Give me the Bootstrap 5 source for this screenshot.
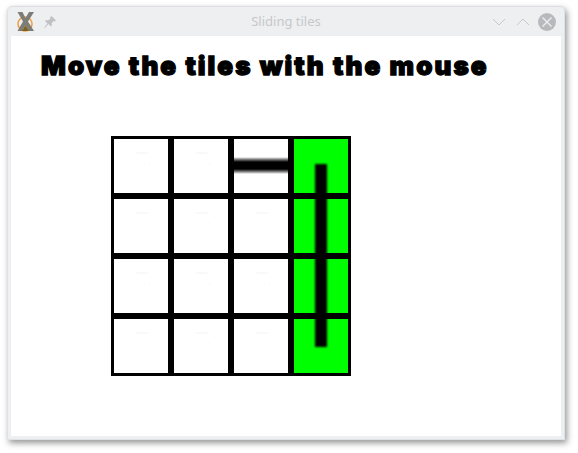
<!DOCTYPE html>
<html lang="en">
<head>
<meta charset="utf-8">
<title>Sliding tiles</title>
<link href="https://cdn.jsdelivr.net/npm/bootstrap@5.3.0/dist/css/bootstrap.min.css" rel="stylesheet">
<style>
html, body { height: 100%; background: #fff; overflow: hidden; }
.desk { padding: 6px 13px 13px 7px; height: 453px; }
.win { height: 434px; background: #eeeff1; border: 1px solid #dfe1e4; border-top-color: #dcdee2; border-radius: 5px 5px 0 0; box-shadow: 2px 3px 6px rgba(0,0,0,.42); }
.tbar { height: 29px; padding: 0 8px 0 8px; position: relative; }
.ttl { font-family: "Noto Sans", sans-serif; font-size: 13px; color: #c6c8cb; position: absolute; left: 0; right: 0; text-align: center; line-height: 29px; }
.xlogo { width: 20px; height: 20px; }
.pin { width: 14px; height: 14px; margin-left: 7px; }
.ctl { width: 16px; height: 16px; }
.cls { width: 18px; height: 18px; margin-left: -1px; }
.pane { background: #fff; margin: 0 3px 3px; padding: 10px 30px 0 100px; min-height: 0; }
.hdg { font-family: "Inter", sans-serif; font-weight: 900; font-size: 26px; line-height: 40px; letter-spacing: 2.05px; color: #000; -webkit-text-stroke: 1.3px #000; margin: 0 0 50px -70px; white-space: nowrap; }
.board { display: grid; grid-template-columns: repeat(4, 60px); grid-auto-rows: 60px; width: 240px; }
.tile { border: 3px solid #000; background-color: #fff; overflow: hidden; }
.faint { background-image: linear-gradient(to right, #fff, #f8f8f8 30%, #f8f8f8 70%, #fff), linear-gradient(#f9f9f9, #f9f9f9); background-size: 16px 2px, 1px 3px; background-position: 20px 13px, 35px 23px; background-repeat: no-repeat; }
.hbar { background-image: linear-gradient(to bottom, #fff 0, #fff 18px, #777 20.5px, #000 23px, #000 30px, #777 32.5px, #fff 35px); }
.grn { background-color: #0f0; }
.vb { display: flex; justify-content: center; align-items: flex-start; }
.vb::before { content: ""; display: block; flex: none; width: 12px; background: #000; filter: blur(1.2px); }
.vtop::before { margin-top: 25px; height: 60px; }
.vmid::before { margin-top: -6px; height: 72px; }
.vbot::before { margin-top: -6px; height: 34px; }
</style>
</head>
<body class="m-0">
<div class="desk">
  <div class="win d-flex flex-column">
    <div class="tbar d-flex align-items-center flex-shrink-0">
      <span class="ttl">Sliding tiles</span>
      <svg class="xlogo" viewBox="0 0 20 20">
        <circle cx="9" cy="12" r="7" fill="none" stroke="#f0a040" stroke-width="1.6"/>
        <path d="M1.500 0h5l3 6L13 0h5l-6 9.500 6 9.500h-5l-3.500-6L6 19H1.500l5.500-9.500z" fill="#7d7c79"/>
        <path d="M6 19l3.500-6L13 19z" fill="#7a6322"/>
      </svg>
      <svg class="pin" viewBox="0 0 14 14">
        <path d="M8.500 1l4.500 4.500-1.500 1-1-.5-2 2.500.5 2-1 1-2.500-2.500L1.500 13l-.5-.5 3.500-4-2.500-2.500 1-1 2 .5L7.500 3.500 7 2.500z" fill="#bfc1c4"/>
      </svg>
      <div class="ms-auto d-flex align-items-center gap-2">
        <svg class="ctl" viewBox="0 0 16 16"><path d="M2 5l6 6 6-6" fill="none" stroke="#c6c8cb" stroke-width="1"/></svg>
        <svg class="ctl" viewBox="0 0 16 16"><path d="M2 11l6-6 6 6" fill="none" stroke="#c6c8cb" stroke-width="1"/></svg>
        <svg class="cls" viewBox="0 0 18 18"><circle cx="9" cy="9" r="9" fill="#b7babd"/><path d="M4.500 4.500l9 9m0-9l-9 9" stroke="#eeeff1" stroke-width="1.300"/></svg>
      </div>
    </div>
    <div class="pane flex-grow-1">
      <h1 class="hdg">Move the tiles with the mouse</h1>
      <div class="board">
        <div class="tile faint"></div><div class="tile faint"></div><div class="tile hbar"></div><div class="tile grn vb vtop"></div>
        <div class="tile faint"></div><div class="tile faint"></div><div class="tile faint"></div><div class="tile grn vb vmid"></div>
        <div class="tile faint"></div><div class="tile faint"></div><div class="tile faint"></div><div class="tile grn vb vmid"></div>
        <div class="tile faint"></div><div class="tile faint"></div><div class="tile faint"></div><div class="tile grn vb vbot"></div>
      </div>
    </div>
  </div>
</div>
<script src="https://cdn.jsdelivr.net/npm/bootstrap@5.3.0/dist/js/bootstrap.bundle.min.js"></script>
</body>
</html>
